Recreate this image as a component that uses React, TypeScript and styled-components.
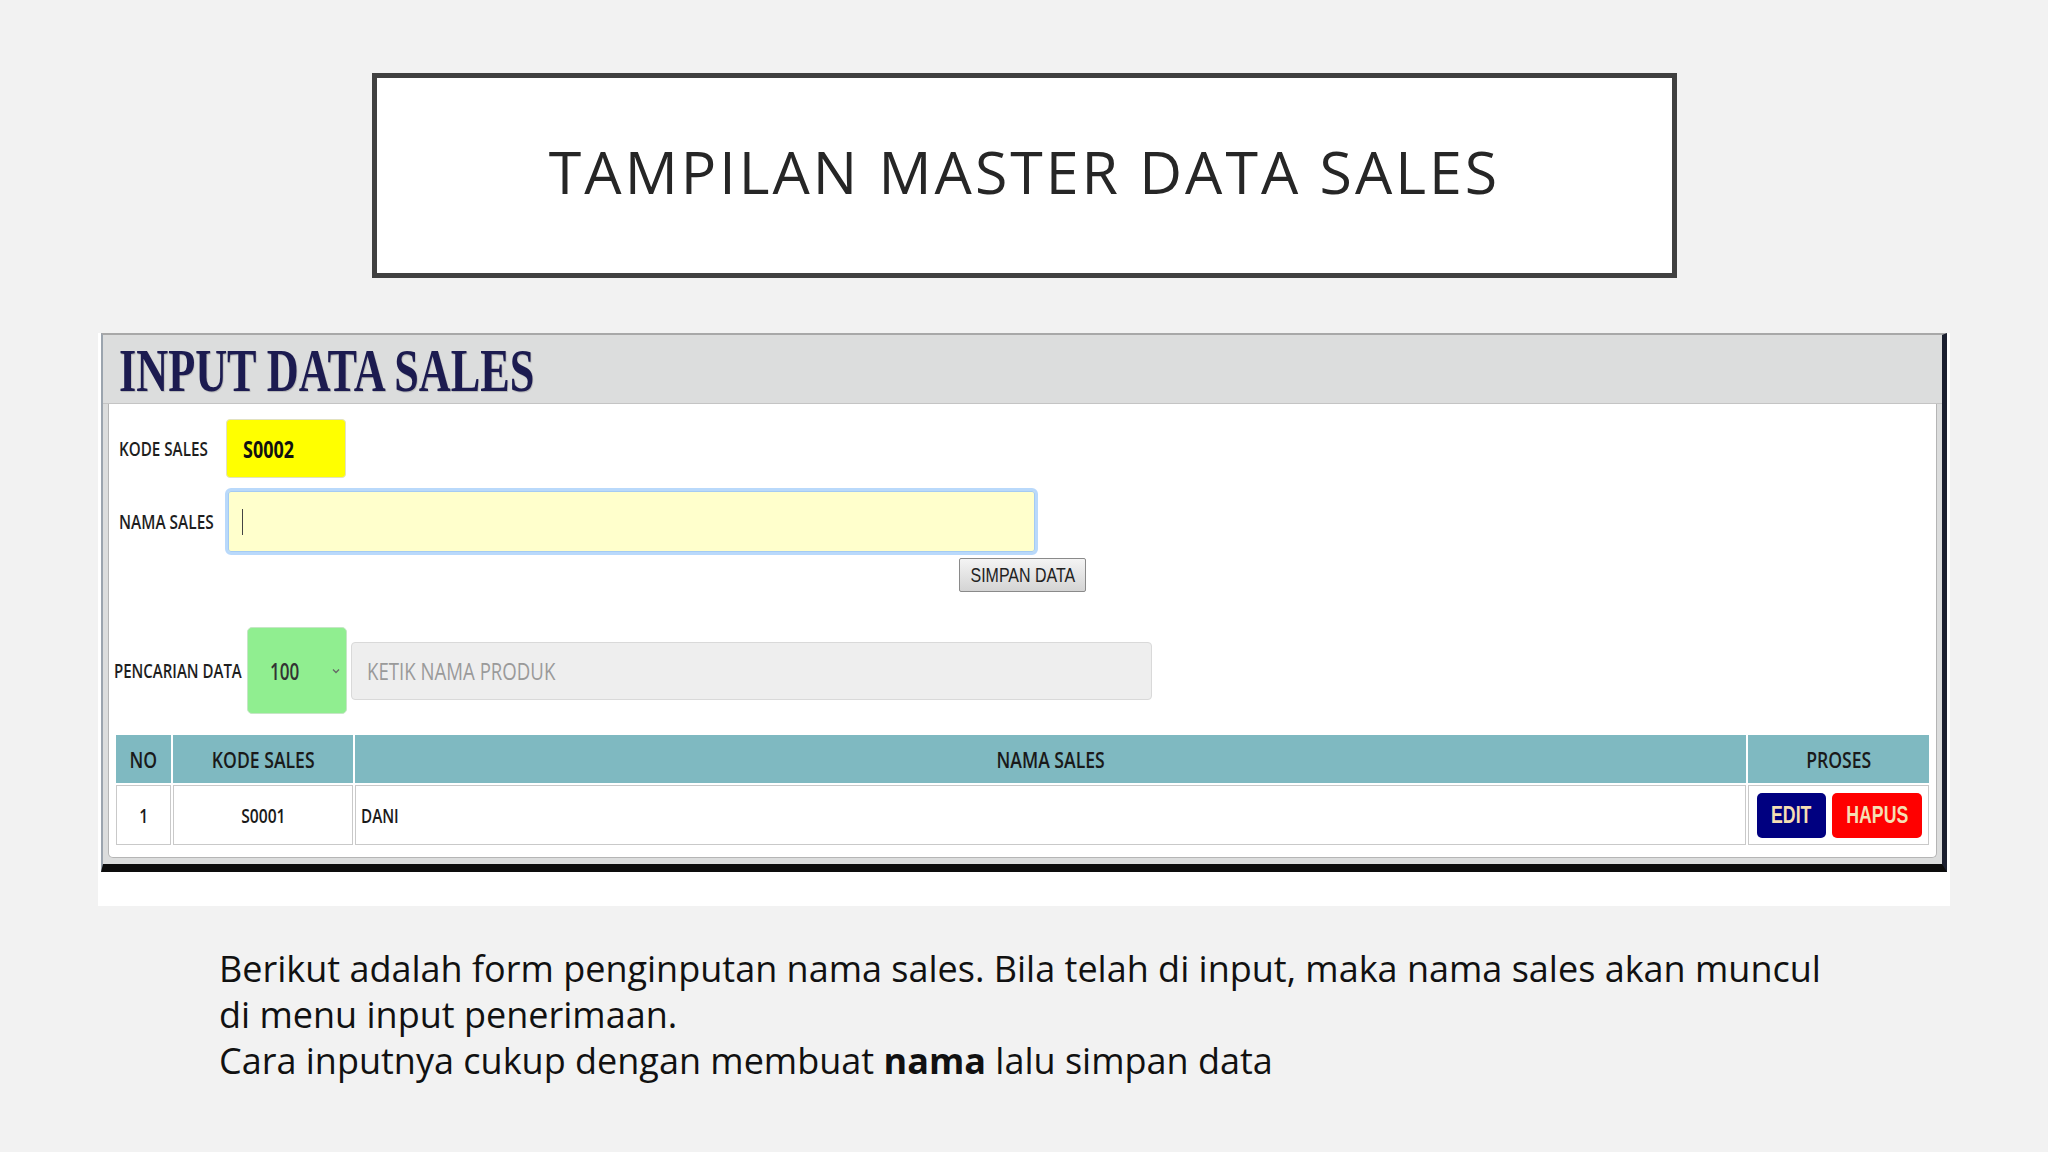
import React from 'react';
import styled, { createGlobalStyle } from 'styled-components';

const GlobalStyle = createGlobalStyle`
  html, body {
    margin: 0;
    padding: 0;
    background: #f2f2f2;
  }
  #root {
    width: 2048px;
    height: 1152px;
  }
`;

const Slide = styled.div`
  width: 2048px;
  height: 1152px;
  box-sizing: border-box;
  padding-top: 73px;
  background: #f2f2f2;
  overflow: hidden;
`;

const TitleBox = styled.div`
  margin-left: 372px;
  width: 1305px;
  height: 205px;
  box-sizing: border-box;
  border: 5px solid #404040;
  background: #ffffff;
  display: flex;
  align-items: center;
  justify-content: center;
  padding-bottom: 8px;
`;

const TitleText = styled.h1`
  margin: 0;
  font-family: 'Open Sans', 'Noto Sans', sans-serif;
  font-weight: 400;
  font-size: 59px;
  line-height: 1;
  letter-spacing: 3px;
  color: #262626;
`;

/* the pasted screenshot of the web form */
const Backdrop = styled.div`
  margin: 55px 0 0 98px;
  width: 1852px;
  box-sizing: border-box;
  padding: 0 3px 34px;
  background: #ffffff;
`;

const Frame = styled.div`
  background: #dcdddd;
  border-left: 2px solid #9ba4ae;
  border-top: 2px solid #a8a8a8;
  border-right: 5px solid #1c2030;
  border-bottom: 8px solid #0d0d0d;
  padding: 0 5px 6px;
`;

const HeadingBand = styled.div`
  height: 69px;
  display: flex;
  align-items: center;
  box-sizing: border-box;
  border-bottom: 1px solid #c4c4c4;
  margin: 0 -5px;
  padding: 3px 0 0 16px;
`;

const Heading = styled.h2`
  margin: 0;
  font-family: 'Liberation Serif', 'Times New Roman', serif;
  font-weight: 700;
  font-size: 61px;
  line-height: 1;
  color: #1c1b50;
  text-shadow: 1px 1px 1px rgba(0, 0, 0, 0.18);
`;

const Squeeze = styled.span<{ $scale: number; $origin?: string }>`
  display: inline-block;
  white-space: nowrap;
  transform: scaleX(${(p) => p.$scale});
  transform-origin: ${(p) => p.$origin ?? 'left'} center;
`;

const Panel = styled.div`
  background: #ffffff;
  border: 1px solid #b5b5b5;
  border-top: none;
  border-radius: 0 0 5px 5px;
  padding: 15px 0 12px;
  display: flex;
  flex-direction: column;
`;

const FieldRow = styled.div<{ $indent: number; $top?: number }>`
  display: flex;
  align-items: center;
  padding-left: ${(p) => p.$indent}px;
  margin-top: ${(p) => p.$top ?? 0}px;
`;

const Label = styled.div<{ $width: number }>`
  flex: none;
  width: ${(p) => p.$width}px;
  font-family: 'Open Sans', 'Noto Sans', sans-serif;
  font-weight: 600;
  font-size: 20px;
  color: #1e1e1e;
`;

const KodeBox = styled.div`
  flex: none;
  width: 120px;
  height: 59px;
  box-sizing: border-box;
  background: #ffff00;
  border: 1px solid #e2e2c0;
  border-radius: 4px;
  display: flex;
  align-items: center;
  padding-left: 16px;
  font-family: 'Open Sans', 'Noto Sans', sans-serif;
  font-weight: 700;
  font-size: 23px;
  color: #111111;
`;

const NamaInput = styled.div`
  flex: none;
  width: 813px;
  height: 67px;
  box-sizing: border-box;
  background: #ffffcc;
  border: 3px solid #b9d9fb;
  border-radius: 6px;
  box-shadow: inset 0 0 0 1px #a4cbf3;
  display: flex;
  align-items: center;
  padding-left: 14px;
`;

const Caret = styled.span`
  width: 1px;
  height: 26px;
  background: #444444;
`;

const SaveButton = styled.button`
  flex: none;
  width: 127px;
  height: 34px;
  padding: 0;
  border: 1px solid #8a8a8a;
  border-radius: 2px;
  background: linear-gradient(#f4f4f4, #d4d4d4);
  font-family: 'Liberation Sans', Arial, sans-serif;
  font-size: 21px;
  color: #222222;
  display: flex;
  align-items: center;
  justify-content: center;
`;

const LimitSelect = styled.div`
  flex: none;
  width: 100px;
  height: 87px;
  box-sizing: border-box;
  background: #90ee90;
  border: 1px solid #c6e6c6;
  border-radius: 5px;
  display: flex;
  align-items: center;
  padding: 0 6px 0 22px;
  font-family: 'Open Sans', 'Noto Sans', sans-serif;
  font-weight: 600;
  font-size: 23px;
  color: #333333;
`;

const Chevron = styled.svg`
  margin-left: auto;
  flex: none;
`;

const SearchBox = styled.div`
  flex: none;
  margin-left: 4px;
  width: 801px;
  height: 58px;
  box-sizing: border-box;
  background: #eeeeee;
  border: 1px solid #d9d9d9;
  border-radius: 4px;
  display: flex;
  align-items: center;
  padding-left: 15px;
  font-family: 'Open Sans', 'Noto Sans', sans-serif;
  font-weight: 400;
  font-size: 23px;
  color: #9a9a9a;
`;

const Table = styled.div`
  margin: 21px 7px 0;
  display: grid;
  grid-template-columns: 55px 180px 1391px 181px;
  grid-template-rows: 48px 60px;
  gap: 2px;
  font-family: 'Open Sans', 'Noto Sans', sans-serif;
  font-weight: 600;
  color: #1a1a1a;
`;

const HeadCell = styled.div`
  background: #7fb9c1;
  display: flex;
  align-items: center;
  justify-content: center;
  font-size: 22px;
`;

const BodyCell = styled.div<{ $align?: 'center' | 'flex-start' }>`
  background: #ffffff;
  border: 1px solid #c9c9c9;
  display: flex;
  align-items: center;
  justify-content: ${(p) => p.$align ?? 'center'};
  padding: 0 5px;
  font-size: 20px;
`;

const ActionCell = styled.div`
  background: #ffffff;
  border: 1px solid #c9c9c9;
  display: flex;
  align-items: center;
  gap: 6px;
  padding-left: 8px;
`;

const ActionButton = styled.button<{ $bg: string; $width: number }>`
  width: ${(p) => p.$width}px;
  height: 45px;
  padding: 0;
  border: none;
  border-radius: 5px;
  background: ${(p) => p.$bg};
  color: #f5deb3;
  font-family: 'Liberation Sans', Arial, sans-serif;
  font-weight: 700;
  font-size: 23px;
  display: flex;
  align-items: center;
  justify-content: center;
`;

const Caption = styled.p`
  margin: 40px 0 0 219px;
  font-family: 'Open Sans', 'Noto Sans', sans-serif;
  font-size: 36px;
  line-height: 46px;
  color: #111111;
`;

export default function App() {
  return (
    <>
      <GlobalStyle />
      <Slide>
        <TitleBox>
          <TitleText>TAMPILAN MASTER DATA SALES</TitleText>
        </TitleBox>

        <Backdrop>
          <Frame>
            <HeadingBand>
              <Heading>
                <Squeeze $scale={0.725}>INPUT DATA SALES</Squeeze>
              </Heading>
            </HeadingBand>
            <Panel>
              <FieldRow $indent={10}>
                <Label $width={107}>
                  <Squeeze $scale={0.76}>KODE SALES</Squeeze>
                </Label>
                <KodeBox>
                  <Squeeze $scale={0.78}>S0002</Squeeze>
                </KodeBox>
              </FieldRow>

              <FieldRow $indent={10} $top={10}>
                <Label $width={106}>
                  <Squeeze $scale={0.77}>NAMA SALES</Squeeze>
                </Label>
                <NamaInput>
                  <Caret />
                </NamaInput>
              </FieldRow>

              <FieldRow $indent={850} $top={3}>
                <SaveButton>
                  <Squeeze $scale={0.76} $origin="center">
                    SIMPAN DATA
                  </Squeeze>
                </SaveButton>
              </FieldRow>

              <FieldRow $indent={5} $top={35}>
                <Label $width={133}>
                  <Squeeze $scale={0.75}>PENCARIAN DATA</Squeeze>
                </Label>
                <LimitSelect>
                  <Squeeze $scale={0.74}>100</Squeeze>
                  <Chevron width="8" height="6" viewBox="0 0 8 6">
                    <path d="M1 1.5 L4 4.5 L7 1.5" fill="none" stroke="#666" strokeWidth="1.3" />
                  </Chevron>
                </LimitSelect>
                <SearchBox>
                  <Squeeze $scale={0.81}>KETIK NAMA PRODUK</Squeeze>
                </SearchBox>
              </FieldRow>

              <Table>
                <HeadCell>
                  <Squeeze $scale={0.8} $origin="center">NO</Squeeze>
                </HeadCell>
                <HeadCell>
                  <Squeeze $scale={0.8} $origin="center">KODE SALES</Squeeze>
                </HeadCell>
                <HeadCell>
                  <Squeeze $scale={0.8} $origin="center">NAMA SALES</Squeeze>
                </HeadCell>
                <HeadCell>
                  <Squeeze $scale={0.8} $origin="center">PROSES</Squeeze>
                </HeadCell>

                <BodyCell>
                  <Squeeze $scale={0.78} $origin="center">1</Squeeze>
                </BodyCell>
                <BodyCell>
                  <Squeeze $scale={0.78} $origin="center">S0001</Squeeze>
                </BodyCell>
                <BodyCell $align="flex-start">
                  <Squeeze $scale={0.76}>DANI</Squeeze>
                </BodyCell>
                <ActionCell>
                  <ActionButton $bg="#000080" $width={69}>
                    <Squeeze $scale={0.77} $origin="center">EDIT</Squeeze>
                  </ActionButton>
                  <ActionButton $bg="#ff0000" $width={90}>
                    <Squeeze $scale={0.77} $origin="center">HAPUS</Squeeze>
                  </ActionButton>
                </ActionCell>
              </Table>
            </Panel>
          </Frame>
        </Backdrop>

        <Caption>
          Berikut adalah form penginputan nama sales. Bila telah di input, maka nama sales akan muncul
          <br />
          di menu input penerimaan.
          <br />
          Cara inputnya cukup dengan membuat <b>nama</b> lalu simpan data
        </Caption>
      </Slide>
    </>
  );
}
